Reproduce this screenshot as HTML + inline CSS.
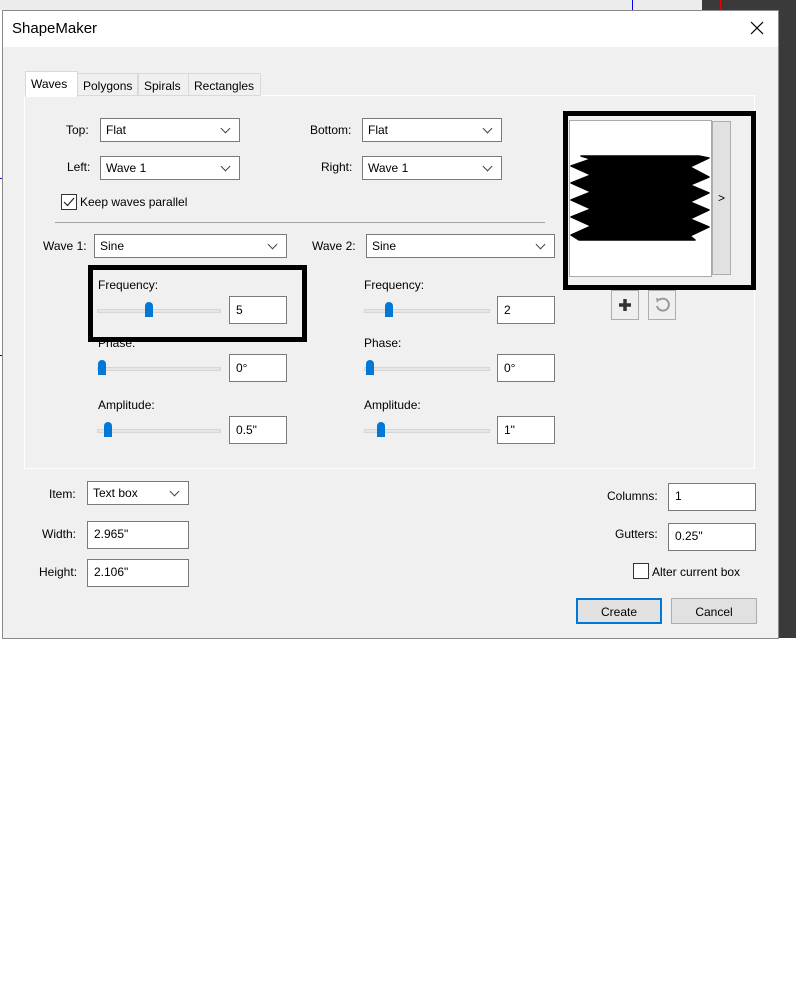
<!DOCTYPE html>
<html><head><meta charset="utf-8"><style>
*{box-sizing:border-box;margin:0;padding:0}
body{width:796px;height:982px;background:#fff;position:relative;overflow:hidden;font-family:"Liberation Sans",sans-serif;font-size:12px;color:#000}
.a{position:absolute}
.lbl{position:absolute;font-size:12px;white-space:nowrap}
.sel{position:absolute;background:#fff;border:1px solid #7a7a7a;height:24px;padding:4px 0 0 5px;font-size:12px}
.sel:after{content:"";position:absolute;right:10px;top:6px;width:6px;height:6px;border-right:1px solid #444;border-bottom:1px solid #444;transform:rotate(45deg)}
.tb{position:absolute;background:#fff;border:1px solid #7a7a7a;height:28px;padding:6px 0 0 6px;font-size:12px}
.trk{position:absolute;height:4px;background:#e6e6e6;border:1px solid #d6d6d6}
.th{position:absolute;width:8px;height:15px;background:#0078d7;border-radius:4px 4px 0 0}
.tab{position:absolute;top:73px;height:23px;border:1px solid #d9d9d9;background:#f0f0f0;padding:5px 0 0 5px;font-size:12px}
</style></head><body>
<div class="a" style="left:0;top:0;width:702px;height:10px;background:#ececec"></div>
<div class="a" style="left:632px;top:0;width:1px;height:10px;background:#00f"></div>
<div class="a" style="left:702px;top:0;width:94px;height:638px;background:#3a3a3a"></div>
<div class="a" style="left:720px;top:0;width:1px;height:10px;background:#e00"></div>
<div class="a" style="left:0;top:178px;width:2px;height:1px;background:#00f"></div>
<div class="a" style="left:0;top:355px;width:2px;height:1px;background:#00f"></div>

<div class="a" style="left:2px;top:10px;width:777px;height:629px;background:#f0f0f0;border:1px solid #8a8a8a"></div>
<div class="a" style="left:3px;top:11px;width:775px;height:36px;background:#fff"></div>
<div class="lbl" style="left:12px;top:20px;font-size:15px">ShapeMaker</div>
<svg class="a" style="left:750px;top:21px" width="14" height="14"><path d="M1 1L13 13M13 1L1 13" stroke="#000" stroke-width="1.2"/></svg>

<div class="a" style="left:24px;top:95px;width:731px;height:374px;border:1px solid #fff;background:#f0f0f0"></div>
<div class="tab" style="left:25px;top:71px;width:53px;height:26px;background:#fff;border-color:#d9d9d9;border-bottom:none;padding-top:5px">Waves</div>
<div class="tab" style="left:77px;width:61px">Polygons</div>
<div class="tab" style="left:138px;width:51px">Spirals</div>
<div class="tab" style="left:188px;width:73px">Rectangles</div>

<div class="lbl" style="left:66px;top:123px">Top:</div>
<div class="sel" style="left:100px;top:118px;width:140px">Flat</div>
<div class="lbl" style="left:310px;top:123px">Bottom:</div>
<div class="sel" style="left:362px;top:118px;width:140px">Flat</div>
<div class="lbl" style="left:67px;top:160px">Left:</div>
<div class="sel" style="left:100px;top:156px;width:140px">Wave 1</div>
<div class="lbl" style="left:321px;top:160px">Right:</div>
<div class="sel" style="left:362px;top:156px;width:140px">Wave 1</div>
<div class="a" style="left:61px;top:194px;width:16px;height:16px;border:1px solid #333;background:#fff"></div>
<svg class="a" style="left:61px;top:194px" width="16" height="16"><path d="M3 8L6.5 11.5L13 4" stroke="#222" fill="none" stroke-width="1.2"/></svg>
<div class="lbl" style="left:80px;top:195px">Keep waves parallel</div>
<div class="a" style="left:55px;top:222px;width:490px;height:1px;background:#a0a0a0"></div>

<div class="lbl" style="left:43px;top:239px">Wave 1:</div>
<div class="sel" style="left:94px;top:234px;width:193px">Sine</div>
<div class="lbl" style="left:312px;top:239px">Wave 2:</div>
<div class="sel" style="left:366px;top:234px;width:189px">Sine</div>

<div class="lbl" style="left:98px;top:278px">Frequency:</div>
<div class="trk" style="left:97px;top:309px;width:124px"></div>
<div class="th" style="left:145px;top:302px"></div>
<div class="tb" style="left:229px;top:296px;width:58px">5</div>
<div class="lbl" style="left:98px;top:336px">Phase:</div>
<div class="trk" style="left:97px;top:367px;width:124px"></div>
<div class="th" style="left:98px;top:360px"></div>
<div class="tb" style="left:229px;top:354px;width:58px">0°</div>
<div class="lbl" style="left:98px;top:398px">Amplitude:</div>
<div class="trk" style="left:97px;top:429px;width:124px"></div>
<div class="th" style="left:104px;top:422px"></div>
<div class="tb" style="left:229px;top:416px;width:58px">0.5"</div>

<div class="lbl" style="left:364px;top:278px">Frequency:</div>
<div class="trk" style="left:364px;top:309px;width:126px"></div>
<div class="th" style="left:385px;top:302px"></div>
<div class="tb" style="left:497px;top:296px;width:58px">2</div>
<div class="lbl" style="left:364px;top:336px">Phase:</div>
<div class="trk" style="left:364px;top:367px;width:126px"></div>
<div class="th" style="left:366px;top:360px"></div>
<div class="tb" style="left:497px;top:354px;width:58px">0°</div>
<div class="lbl" style="left:364px;top:398px">Amplitude:</div>
<div class="trk" style="left:364px;top:429px;width:126px"></div>
<div class="th" style="left:377px;top:422px"></div>
<div class="tb" style="left:497px;top:416px;width:58px">1"</div>

<div class="a" style="left:88px;top:265px;width:219px;height:77px;border:5px solid #000"></div>

<div class="a" style="left:569px;top:120px;width:143px;height:157px;background:#fff;border:1px solid #aaa"></div>
<svg class="a" style="left:0;top:0" width="796" height="300"><polygon fill="#000" stroke="#000" stroke-width="1.5" stroke-linejoin="round" points="581,156 699,156 709,158 690,167 709,177 690,185 709,193 690,202 709,210 690,219 709,227 690,236 695,240 579,240 571,235 591,226 571,217 591,209 571,200 591,192 571,183 591,175 571,166 591,159"/></svg>
<div class="a" style="left:712px;top:121px;width:19px;height:154px;background:#e1e1e1;border:1px solid #adadad;font-size:12px;padding-top:69px;text-align:center">&gt;</div>
<div class="a" style="left:563px;top:111px;width:193px;height:179px;border:5px solid #000"></div>
<div class="a" style="left:611px;top:290px;width:28px;height:30px;border:1px solid #adadad;background:#efefef"></div>
<svg class="a" style="left:611px;top:290px" width="28" height="30"><path d="M14 9V21M8 15H20" stroke="#333" stroke-width="3.5"/></svg>
<div class="a" style="left:648px;top:290px;width:28px;height:30px;border:1px solid #adadad;background:#efefef"></div>
<svg class="a" style="left:648px;top:290px" width="28" height="30"><path d="M11 10A6 6 0 1 1 9 16" stroke="#999" stroke-width="2" fill="none"/><path d="M8 8L12 9L9 13Z" fill="#999"/></svg>

<div class="lbl" style="left:49px;top:487px">Item:</div>
<div class="sel" style="left:87px;top:481px;width:102px">Text box</div>
<div class="lbl" style="left:42px;top:527px">Width:</div>
<div class="tb" style="left:87px;top:521px;width:102px;padding-top:5px">2.965"</div>
<div class="lbl" style="left:39px;top:565px">Height:</div>
<div class="tb" style="left:87px;top:559px;width:102px;padding-top:5px">2.106"</div>

<div class="lbl" style="left:607px;top:489px">Columns:</div>
<div class="tb" style="left:668px;top:483px;width:88px;padding-top:5px">1</div>
<div class="lbl" style="left:615px;top:527px">Gutters:</div>
<div class="tb" style="left:668px;top:523px;width:88px;padding-top:5px">0.25"</div>
<div class="a" style="left:633px;top:563px;width:16px;height:16px;border:1px solid #333;background:#fff"></div>
<div class="lbl" style="left:652px;top:565px">Alter current box</div>
<div class="a" style="left:576px;top:598px;width:86px;height:26px;background:#e1e1e1;border:2px solid #0078d7;text-align:center;padding-top:5px">Create</div>
<div class="a" style="left:671px;top:598px;width:86px;height:26px;background:#e1e1e1;border:1px solid #adadad;text-align:center;padding-top:6px">Cancel</div>
</body></html>
